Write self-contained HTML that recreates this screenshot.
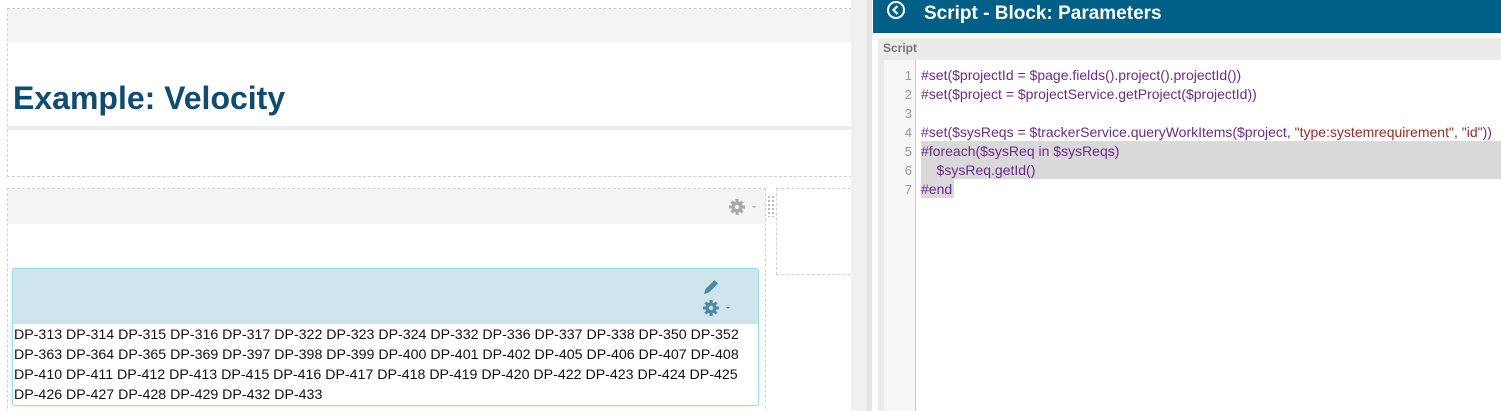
<!DOCTYPE html>
<html><head><meta charset="utf-8"><style>
*{margin:0;padding:0;box-sizing:border-box}
html,body{width:1501px;height:411px;overflow:hidden}
body{background:#fff;position:relative;font-family:"Liberation Sans",sans-serif}
.a{position:absolute}
.dash{border:1px dashed #d0d0d0}
.ids div{height:20px;line-height:20px;font-size:14.2px;color:#111;white-space:nowrap}
.code div{height:19px;line-height:19px;font-size:14px;white-space:pre;color:#6e2b8c}
.ln div{height:19px;line-height:19px;font-size:13px;color:#999;text-align:right}
.s{color:#a3281f}
</style></head><body>
<div class="a dash" style="left:7px;top:8px;width:860px;height:169px"></div>
<div class="a" style="left:8px;top:9px;width:843px;height:33px;background:#f4f4f4"></div>
<div class="a" style="left:13px;top:80px;font-size:32px;font-weight:bold;color:#0f4c72">Example: Velocity</div>
<div class="a" style="left:8px;top:126px;width:843px;height:4px;background:#e9eef2"></div>
<div class="a dash" style="left:7px;top:188px;width:759px;height:240px"></div>
<div class="a" style="left:8px;top:189px;width:757px;height:35px;background:#f4f4f4"></div>
<svg class="a" style="left:729px;top:198px" width="30" height="18" viewBox="0 0 30 18"><g fill="#a8a8a8"><circle cx="8" cy="9" r="5.5"/><g stroke="#a8a8a8" stroke-width="3"><line x1="8" y1="1" x2="8" y2="17"/><line x1="0" y1="9" x2="16" y2="9"/><line x1="2.5" y1="3.5" x2="13.5" y2="14.5"/><line x1="13.5" y1="3.5" x2="2.5" y2="14.5"/></g><circle cx="8" cy="9" r="2.2" fill="#f4f4f4"/><path d="M23 8h4l-2 2z"/></g></svg>
<div class="a" style="left:767px;top:195px;width:8px;height:22px;background:radial-gradient(circle,#bbb 1px,transparent 1.3px) 0 0/4px 4px"></div>
<div class="a dash" style="left:776px;top:188px;width:90px;height:87px"></div>
<div class="a" style="left:12px;top:268px;width:747px;height:138px;border:1px solid #9fdbeb;border-radius:3px;box-shadow:0 0 3px #bde8f3;background:#fff"></div>
<div class="a" style="left:13px;top:269px;width:745px;height:55px;background:#cde4eb;border-radius:2px 2px 0 0"></div>
<svg class="a" style="left:702px;top:278px" width="20" height="18" viewBox="0 0 20 18"><path d="M2 16l1.5-5 9-9 3.5 3.5-9 9z" fill="#4d8aa5"/></svg>
<svg class="a" style="left:702px;top:299px" width="32" height="18" viewBox="0 0 32 18"><g fill="#4d8aa5"><g stroke="#4d8aa5" stroke-width="3"><line x1="9" y1="1" x2="9" y2="17"/><line x1="1" y1="9" x2="17" y2="9"/><line x1="3.5" y1="3.5" x2="14.5" y2="14.5"/><line x1="14.5" y1="3.5" x2="3.5" y2="14.5"/></g><circle cx="9" cy="9" r="5.5"/><circle cx="9" cy="9" r="2.2" fill="#cde4eb"/><path d="M24 8h4l-2 2z"/></g></svg>
<div class="a ids" style="left:14px;top:325px">
<div>DP-313 DP-314 DP-315 DP-316 DP-317 DP-322 DP-323 DP-324 DP-332 DP-336 DP-337 DP-338 DP-350 DP-352</div>
<div>DP-363 DP-364 DP-365 DP-369 DP-397 DP-398 DP-399 DP-400 DP-401 DP-402 DP-405 DP-406 DP-407 DP-408</div>
<div>DP-410 DP-411 DP-412 DP-413 DP-415 DP-416 DP-417 DP-418 DP-419 DP-420 DP-422 DP-423 DP-424 DP-425</div>
<div>DP-426 DP-427 DP-428 DP-429 DP-432 DP-433</div>
</div>
<div class="a" style="left:851px;top:0;width:17px;height:411px;background:#f0f0f0"></div>
<div class="a" style="left:867px;top:0;width:5px;height:411px;background:#e5e5e5"></div>
<div class="a" style="left:873px;top:0;width:628px;height:33px;background:#005f87"></div>
<svg class="a" style="left:885px;top:0px" width="22" height="22" viewBox="0 0 22 22"><circle cx="11" cy="10" r="8" fill="none" stroke="#fff" stroke-width="2"/><path d="M12.5 6l-4 4 4 4" fill="none" stroke="#fff" stroke-width="2.2"/></svg>
<div class="a" style="left:924px;top:3px;font-size:19px;font-weight:bold;color:#fff">Script - Block: Parameters</div>
<div class="a" style="left:873px;top:33px;width:628px;height:378px;background:#fff"></div>
<div class="a" style="left:878px;top:38px;width:623px;height:373px;background:#ebebeb"></div>
<div class="a" style="left:883px;top:41px;font-size:12px;font-weight:bold;color:#777">Script</div>
<div class="a" style="left:884px;top:60px;width:617px;height:351px;background:#fff"></div>
<div class="a" style="left:884px;top:60px;width:32px;height:351px;background:#f6f6f6;border-right:1px solid #ccc"></div>
<div class="a" style="left:921px;top:141px;width:580px;height:38px;background:#d9d9d9"></div>
<div class="a" style="left:921px;top:179px;width:33px;height:19px;background:#d9d9d9"></div>
<div class="a ln" style="left:884px;top:66px;width:28px"><div>1</div><div>2</div><div>3</div><div>4</div><div>5</div><div>6</div><div>7</div></div>
<div class="a code" style="left:921px;top:66px">
<div>#set($projectId = $page.fields().project().projectId())</div>
<div>#set($project = $projectService.getProject($projectId))</div>
<div> </div>
<div>#set($sysReqs = $trackerService.queryWorkItems($project, <span class="s">"type:systemrequirement"</span>, <span class="s">"id"</span>))</div>
<div>#foreach($sysReq in $sysReqs)</div>
<div>    $sysReq.getId()</div>
<div>#end</div>
</div>
</body></html>
